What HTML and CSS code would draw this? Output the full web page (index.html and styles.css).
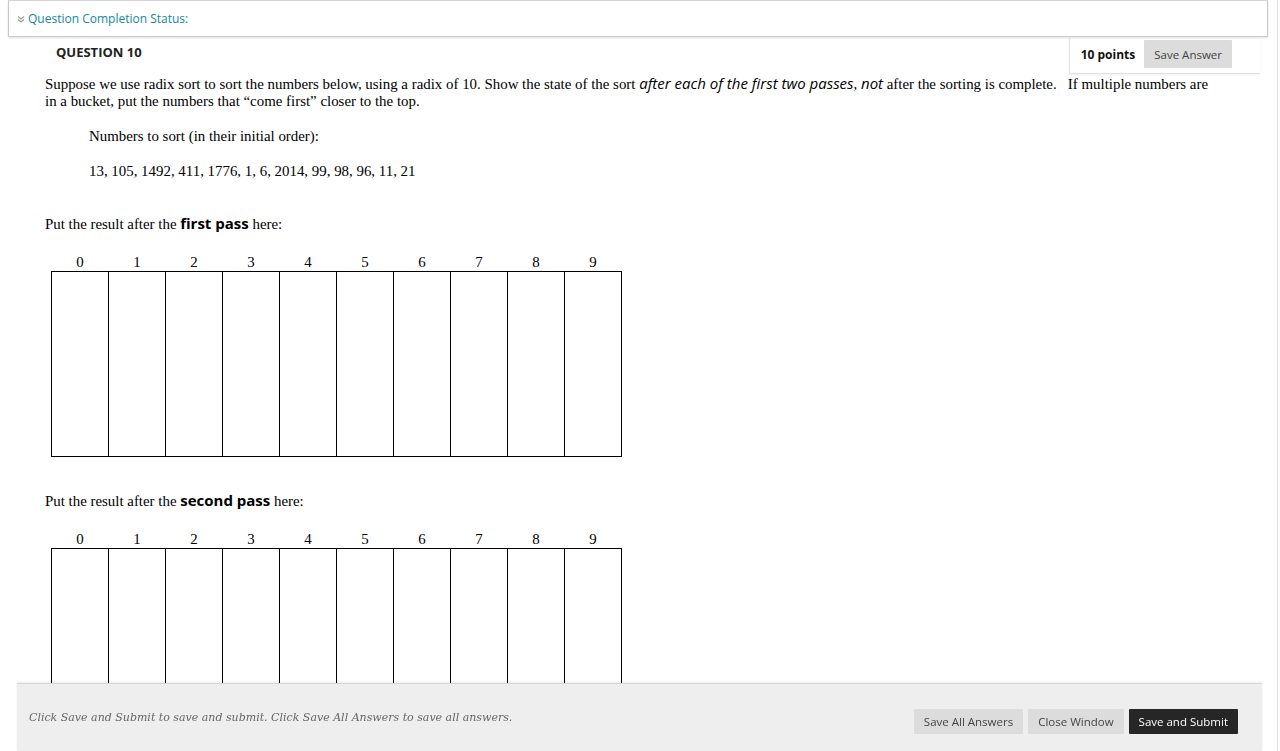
FILE: index.html
```html
<!DOCTYPE html>
<html>
<head>
<meta charset="utf-8">
<link rel="stylesheet" href="styles.css">
</head>
<body>
<div class="edge-line"></div>
<div class="status-bar">
  <svg class="chev" width="8" height="8" viewBox="0 0 8 8"><path d="M1 1.5 L4 4 L7 1.5 M1 4.5 L4 7 L7 4.5" fill="none" stroke="#9a9a9a" stroke-width="1.3"/></svg>
  <span class="status-link">Question Completion Status:</span>
</div>

<div class="q-header">
  <h2 class="q-title">QUESTION 10</h2>
  <div class="points-box">
    <span class="points">10 points</span>
    <button class="btn btn-light save-answer">Save Answer</button>
  </div>
</div>

<div class="q-body">
  <p class="para first">Suppose we use radix sort to sort the numbers below, using a radix of 10. Show the state of the sort <em class="sans-i">after each of the first two passes</em>, <em class="sans-i">not</em> after the sorting is complete.&nbsp;&nbsp; If multiple numbers are in a bucket, put the numbers that “come first” closer to the top.</p>
  <p class="para indent">Numbers to sort (in their initial order):</p>
  <p class="para indent">13, 105, 1492, 411, 1776, 1, 6, 2014, 99, 98, 96, 11, 21</p>

  <p class="para prompt">Put the result after the <b class="sans-b">first pass</b> here:</p>
  <table class="buckets">
    <tr class="labels"><td>0</td><td>1</td><td>2</td><td>3</td><td>4</td><td>5</td><td>6</td><td>7</td><td>8</td><td>9</td></tr>
    <tr class="cells"><td></td><td></td><td></td><td></td><td></td><td></td><td></td><td></td><td></td><td></td></tr>
  </table>

  <p class="para prompt2">Put the result after the <b class="sans-b">second pass</b> here:</p>
  <table class="buckets">
    <tr class="labels"><td>0</td><td>1</td><td>2</td><td>3</td><td>4</td><td>5</td><td>6</td><td>7</td><td>8</td><td>9</td></tr>
    <tr class="cells"><td></td><td></td><td></td><td></td><td></td><td></td><td></td><td></td><td></td><td></td></tr>
  </table>
</div>

<div class="footer">
  <p class="footer-text">Click Save and Submit to save and submit. Click Save All Answers to save all answers.</p>
  <div class="footer-btns">
    <button class="btn btn-light">Save All Answers</button>
    <button class="btn btn-light">Close Window</button>
    <button class="btn btn-dark">Save and Submit</button>
  </div>
</div>
</body>
</html>
```
FILE: styles.css
```css
html, body {
  margin: 0;
  padding: 0;
  background: #fff;
}
body {
  font-family: "Liberation Serif", "Times New Roman", serif;
  color: #000;
  height: 751px;
  overflow: hidden;
}
.edge-line {
  position: fixed;
  top: 0;
  bottom: 0;
  right: 2px;
  width: 1px;
  background: #e0e0e0;
}
.status-bar {
  margin: 0 12px 0 8px;
  height: 37px;
  border: 1px solid #c9c9c9;
  border-top-color: #d5d5d5;
  box-shadow: 0 1px 2px rgba(0,0,0,0.12);
  display: flex;
  align-items: center;
  padding-left: 8px;
  box-sizing: border-box;
  gap: 3px;
}
.chev { margin-top: 1px; }
.status-link {
  font-family: "Open Sans", sans-serif;
  font-size: 12px;
  color: #16879c;
}
.q-header {
  display: flex;
  justify-content: space-between;
  align-items: flex-start;
  padding-left: 56px;
  padding-right: 20px;
}
.q-title {
  margin: 6px 0 0 0;
  font-family: "Open Sans", sans-serif;
  font-weight: 700;
  font-size: 13px;
  color: #222;
}
.points-box {
  display: flex;
  align-items: center;
  gap: 9px;
  padding: 3px 28px 5px 11px;
  border-left: 1px solid #e2e2e2;
  border-bottom: 1px solid #e2e2e2;
  box-shadow: 0 1px 2px rgba(0,0,0,0.06);
}
.points {
  font-family: "Open Sans", sans-serif;
  font-weight: 700;
  font-size: 12px;
  color: #111;
}
.btn {
  font-family: "Open Sans", sans-serif;
  font-size: 11.5px;
  border: none;
  border-radius: 1px;
  padding: 0 10px;
  height: 26px;
  cursor: pointer;
}
.btn-light {
  background: #dcdcdc;
  color: #444;
}
.btn-dark {
  background: #262626;
  color: #fff;
}
.save-answer {
  height: 28px;
  padding: 0 10px;
}
.q-body {
  padding-left: 45px;
  padding-right: 65px;
}
.para {
  font-size: 14.9px;
  line-height: 17px;
  margin: 0;
}
.para.first { margin-top: 1px; }
.para.indent { padding-left: 44px; margin-top: 18px; }
.para.indent + .para.indent { margin-top: 18px; }
.para.prompt { margin-top: 35px; }
.para.prompt2 { margin-top: 35px; }
.sans-i {
  font-family: "Open Sans", sans-serif;
  font-style: italic;
  font-size: 15px;
}
.sans-b {
  font-family: "Open Sans", sans-serif;
  font-weight: 700;
  font-size: 15px;
}
.buckets {
  border-collapse: collapse;
  margin: 22px 0 0 6px;
  table-layout: fixed;
}
.buckets td {
  width: 56px;
  padding: 0;
  font-size: 14.9px;
}
.labels td {
  text-align: center;
  height: 14px;
  line-height: 14px;
  padding-bottom: 2px;
}
.cells td {
  border: 1px solid #000;
  height: 184px;
}
.footer {
  position: fixed;
  left: 17px;
  right: 18px;
  bottom: 0;
  height: 68px;
  background: #eeeeee;
  border-top: 1px solid #d6d6d6;
  box-shadow: 0 -1px 2px rgba(0,0,0,0.08);
  display: flex;
  align-items: center;
  justify-content: space-between;
  padding: 0 24px 0 12px;
  box-sizing: border-box;
}
.footer-text {
  margin: 0;
  font-family: "DejaVu Serif", Georgia, serif;
  font-style: italic;
  font-size: 11px;
  color: #666;
}
.footer-btns {
  display: flex;
  gap: 5px;
  margin-top: 8px;
}
.footer-btns .btn { height: 25px; }
```
